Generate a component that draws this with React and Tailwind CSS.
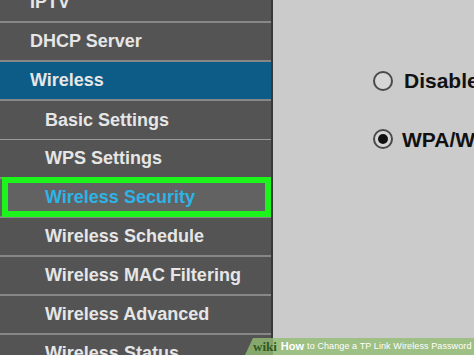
import React from 'react';

const menu = [
  { label: 'IPTV', level: 0, first: true },
  { label: 'DHCP Server', level: 0 },
  { label: 'Wireless', level: 0, active: true },
  { label: 'Basic Settings', level: 1, thin: true },
  { label: 'WPS Settings', level: 1 },
  { label: 'Wireless Security', level: 1, selected: true },
  { label: 'Wireless Schedule', level: 1 },
  { label: 'Wireless MAC Filtering', level: 1 },
  { label: 'Wireless Advanced', level: 1 },
  { label: 'Wireless Status', level: 1 },
];

const Radio = ({ checked }) => (
  <span className="w-[20px] h-[20px] rounded-full border-2 border-[#4a4a4a] bg-[#d6d6d6] flex items-center justify-center shrink-0">
    {checked && <span className="w-[10px] h-[10px] rounded-full bg-[#111]" />}
  </span>
);

export default function App() {
  return (
    <div className="relative w-[474px] h-[355px] overflow-hidden bg-[#cbcbcb] flex font-['Liberation_Sans',Arial,sans-serif]">
      {/* Sidebar */}
      <div className="w-[273px] shrink-0 border-r-2 border-[#393939] bg-[#555555] flex flex-col -mt-[16px]">
        {menu.map((item) => (
          <div
            key={item.label}
            className={`relative h-[39px] shrink-0 flex items-center text-[18px] font-bold ${
              item.thin ? 'border-b border-[#9a9a9a]' : 'border-b-2 border-[#878787]'
            } ${item.active ? 'bg-[#0d5b87]' : item.selected ? 'bg-[#626262]' : 'bg-[#545454]'} ${
              item.level ? 'pl-[45px]' : 'pl-[30px]'
            } ${item.selected ? 'text-[#2db4e6]' : 'text-[#e6e6e6]'}`}
          >
            {item.selected && (
              <span className="absolute left-[2px] right-0 -top-[2px] -bottom-[1px] border-[6px] border-[#1cf51c]" />
            )}
            <span className="relative">{item.label}</span>
          </div>
        ))}
      </div>

      {/* Content */}
      <div className="flex-1 pl-[100px] pt-[65px] flex flex-col gap-[27px] whitespace-nowrap">
        <div className="flex items-center gap-[11px] text-[21px] font-bold text-[#111]">
          <Radio />
          <span>Disable Security</span>
        </div>
        <div className="flex items-center gap-[9px] text-[21px] font-bold text-[#111]">
          <Radio checked />
          <span>WPA/WPA2 - Personal</span>
        </div>
      </div>

      {/* watermark */}
      <div className="absolute right-0 bottom-0 h-[17px] w-[229px] bg-[#93bd72]/80 [clip-path:polygon(8px_0,100%_0,100%_100%,0_100%)] flex items-center pl-[8px] whitespace-nowrap">
        <span className="font-['Liberation_Serif',serif] font-bold text-[13px] text-[#2f5a1f] leading-none">wiki</span>
        <span className="ml-[4px] font-bold text-[11px] text-white leading-none">How</span>
        <span className="ml-[3px] text-[9px] tracking-[0.1px] text-white leading-none">to Change a TP Link Wireless Password</span>
      </div>
    </div>
  );
}
